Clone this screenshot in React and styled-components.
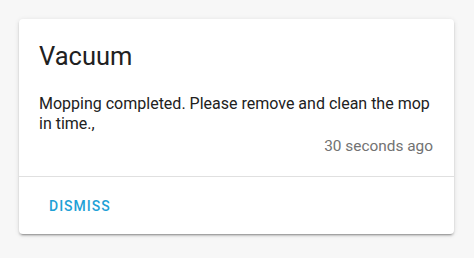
import React from 'react';
import styled, { createGlobalStyle } from 'styled-components';

const GlobalStyle = createGlobalStyle`
  html, body {
    margin: 0;
    padding: 0;
    background: #f7f7f7;
    font-family: Roboto, "Noto Sans", sans-serif;
  }
  body {
    padding: 19px;
  }
`;

const Card = styled.div`
  width: 435px;
  background: #fff;
  border-radius: 4px;
  box-shadow: 0 2px 2px 0 rgba(0, 0, 0, 0.14), 0 1px 5px 0 rgba(0, 0, 0, 0.12),
    0 3px 1px -2px rgba(0, 0, 0, 0.2);
  overflow: hidden;
`;

const Content = styled.div`
  padding: 21px 21px 20px 20px;
`;

const Title = styled.h1`
  margin: 0;
  font-size: 25.5px;
  line-height: 32px;
  font-weight: 400;
  color: #212121;
`;

const Message = styled.p`
  margin: 22px 0 0;
  font-size: 16px;
  line-height: 20px;
  color: #212121;
`;

const Time = styled.div`
  margin-top: 2px;
  text-align: right;
  font-size: 15.4px;
  line-height: 20px;
  color: #727272;
`;

const Actions = styled.div`
  height: 57px;
  border-top: 1px solid #e0e0e0;
  display: flex;
  align-items: center;
  padding: 0 20px;
`;

const Button = styled.button`
  background: none;
  border: none;
  padding: 0 10px;
  height: 36px;
  font-family: Roboto, sans-serif;
  font-size: 14px;
  font-weight: 500;
  letter-spacing: 1px;
  text-transform: uppercase;
  color: ${props => props.color || '#1fa1d6'};
  cursor: pointer;
`;

const App = () => (
  <>
    <GlobalStyle />
    <Card>
      <Content>
        <Title>Vacuum</Title>
        <Message>Mopping completed. Please remove and clean the mop in time.,</Message>
        <Time>30 seconds ago</Time>
      </Content>
      <Actions>
        <Button>Dismiss</Button>
      </Actions>
    </Card>
  </>
);

export default App;
